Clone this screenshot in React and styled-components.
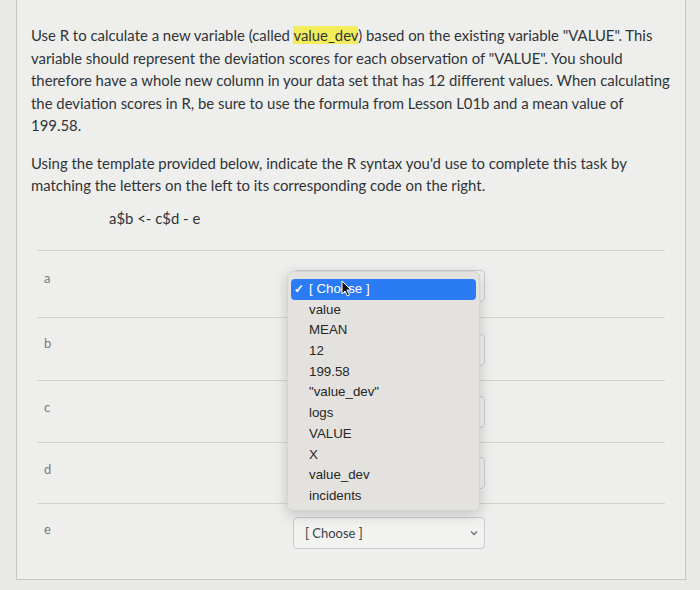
import React from "react";
import styled, { createGlobalStyle } from "styled-components";

const Global = createGlobalStyle`
  html, body { margin: 0; padding: 0; }
  body {
    background: #e9e9e7;
    font-family: Lato, "Open Sans", sans-serif;
    color: #2f3438;
    width: 700px;
    height: 590px;
    overflow: hidden;
  }
`;

const Box = styled.div`
  margin-left: 16px;
  width: 670px;
  height: 580px;
  box-sizing: border-box;
  background: #eeeeec;
  border-left: 1px solid #c6c6c4;
  border-right: 1px solid #c6c6c4;
  border-bottom: 1px solid #c6c6c4;
  padding: 24px 10px 0 14px;
`;

const Para = styled.p`
  margin: 0 0 ${(p) => p.$mb || 0}px 0;
  font-size: 14.9px;
  line-height: 22.5px;
`;

const Mark = styled.span`
  background: #f3ed5c;
`;

const Formula = styled.div`
  margin: 10px 0 0 78px;
  font-size: 14.9px;
  line-height: 22.5px;
`;

const Rows = styled.div`
  margin: 21px 10px 0 6px;
`;

const Row = styled.div`
  position: relative;
  display: grid;
  grid-template-columns: 256px 192px;
  align-items: start;
  height: ${(p) => p.$h}px;
  border-top: 1px solid #d2d2d0;
  box-sizing: border-box;
`;

const Letter = styled.span`
  padding-left: 7px;
  margin-top: ${(p) => p.$top}px;
  font-size: 13px;
  line-height: 16px;
  color: #767c80;
`;

const SelectBox = styled.div`
  position: relative;
  margin-top: ${(p) => p.$top}px;
  height: 32px;
  box-sizing: border-box;
  border: 1px solid #c9cdd0;
  border-radius: 4px;
  background: #f2f2f0;
  display: flex;
  align-items: center;
  justify-content: space-between;
  padding: 0 6px 0 11px;
  font-size: 13px;
  color: #3a4045;
`;

const Chevron = styled.svg`
  width: 8px;
  height: 6px;
`;

const Menu = styled.div`
  position: absolute;
  left: -7px;
  top: 0;
  width: 193px;
  box-sizing: border-box;
  padding: 7px 3px 3px 3px;
  background: #e4e2df;
  border-radius: 6px;
  border: 1px solid #d6d4d1;
  box-shadow: 0 4px 14px rgba(0, 0, 0, 0.18);
  font-family: "Liberation Sans", Arial, sans-serif;
  font-size: 13.3px;
  z-index: 5;
`;

const Item = styled.div`
  position: relative;
  height: 20.7px;
  line-height: 20.7px;
  padding-left: 18px;
  border-radius: 4px;
  color: ${(p) => (p.$active ? "#ffffff" : "#262626")};
  background: ${(p) => (p.$active ? "#2b7bf4" : "transparent")};
`;

const Check = styled.span`
  position: absolute;
  left: 3px;
  top: 0;
  font-size: 12px;
  font-weight: bold;
`;

const Cursor = styled.svg`
  position: absolute;
  left: 50px;
  top: 1px;
  width: 11px;
  height: 17px;
  z-index: 6;
`;

const options = [
  "value",
  "MEAN",
  "12",
  "199.58",
  '"value_dev"',
  "logs",
  "VALUE",
  "X",
  "value_dev",
  "incidents",
];

const rows = [
  { l: "a", h: 67, lt: 19, st: 19 },
  { l: "b", h: 63, lt: 17, st: 16 },
  { l: "c", h: 62, lt: 18, st: 15 },
  { l: "d", h: 61, lt: 18, st: 14 },
  { l: "e", h: 76, lt: 17, st: 13 },
];

function Select({ open, top }) {
  return (
    <SelectBox $top={top}>
      <span>[ Choose ]</span>
      <Chevron viewBox="0 0 8 6">
        <path d="M1 1.5 L4 4.5 L7 1.5" fill="none" stroke="#6a7075" strokeWidth="1.3" />
      </Chevron>
      {open && (
        <Menu>
          <Item $active>
            <Check>✓</Check>[ Choose ]
            <Cursor viewBox="0 0 11 17">
              <path d="M1 1 L1 14 L4 11 L6.5 16 L8.5 15 L6 10 L10 10 Z" fill="#111" stroke="#fff" strokeWidth="1" />
            </Cursor>
          </Item>
          {options.map((o, i) => (
            <Item key={i}>{o}</Item>
          ))}
        </Menu>
      )}
    </SelectBox>
  );
}

export default function App() {
  return (
    <>
      <Global />
      <Box>
        <Para $mb={15}>
          Use R to calculate a new variable (called <Mark>value_dev</Mark>) based on the existing variable
          "VALUE". This variable should represent the deviation scores for each observation of "VALUE". You
          should therefore have a whole new column in your data set that has 12 different values. When
          calculating the deviation scores in R, be sure to use the formula from Lesson L01b and a mean value
          of 199.58.
        </Para>
        <Para>
          Using the template provided below, indicate the R syntax you'd use to complete this task by matching
          the letters on the left to its corresponding code on the right.
        </Para>
        <Formula>a$b &lt;- c$d - e</Formula>
        <Rows>
          {rows.map((r, i) => (
            <Row key={r.l} $h={r.h}>
              <Letter $top={r.lt}>{r.l}</Letter>
              <Select open={i === 0} top={r.st} />
            </Row>
          ))}
        </Rows>
      </Box>
    </>
  );
}
